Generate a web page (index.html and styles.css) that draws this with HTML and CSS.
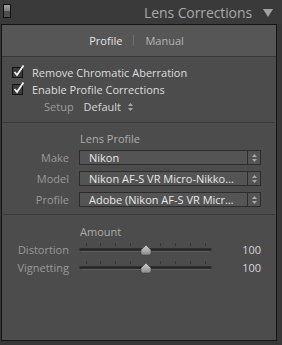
FILE: index.html
```html
<!DOCTYPE html>
<html>
<head>
<meta charset="utf-8">
<link rel="stylesheet" href="styles.css">
</head>
<body>
<div class="header">
  <span class="collapse"></span>
  <div class="title">
    <span>Lens Corrections</span>
    <svg class="tri" width="10" height="8" viewBox="0 0 10 8"><path d="M0 0 H10 L5 8 Z" fill="#a2a2a2"/></svg>
  </div>
</div>
<div class="panel">
  <div class="tabs">
    <span class="tab active">Profile</span>
    <span class="tab-sep"></span>
    <span class="tab">Manual</span>
  </div>
  <div class="content">
    <div class="check">
      <svg width="14" height="14" viewBox="0 0 14 14"><rect x="0.5" y="3.5" width="10" height="10" fill="#3a3a3a" stroke="#141414"/><path d="M2.5 8 L5 11 L11.5 1.5" fill="none" stroke="#f0f0f0" stroke-width="1.8"/></svg>
      <span>Remove Chromatic Aberration</span>
    </div>
    <div class="check">
      <svg width="14" height="14" viewBox="0 0 14 14"><rect x="0.5" y="3.5" width="10" height="10" fill="#3a3a3a" stroke="#141414"/><path d="M2.5 8 L5 11 L11.5 1.5" fill="none" stroke="#f0f0f0" stroke-width="1.8"/></svg>
      <span>Enable Profile Corrections</span>
    </div>
    <div class="setup">
      <span class="label">Setup</span>
      <span class="setup-value">Default</span>
      <svg width="7" height="10" viewBox="0 0 7 10"><path d="M3.5 1 L6 4 H1 Z M1 6 H6 L3.5 9 Z" fill="#a8a8a8"/></svg>
    </div>
    <div class="divider"></div>
    <div class="section-title first">Lens Profile</div>
    <div class="row sel-row first-sel">
      <span class="label">Make</span>
      <div class="select"><span class="sel-text">Nikon</span><span class="sel-arrow"><svg width="7" height="10" viewBox="0 0 7 10"><path d="M3.5 1 L6 4 H1 Z M1 6 H6 L3.5 9 Z" fill="#a8a8a8"/></svg></span></div>
    </div>
    <div class="row sel-row">
      <span class="label">Model</span>
      <div class="select"><span class="sel-text">Nikon AF-S VR Micro-Nikko…</span><span class="sel-arrow"><svg width="7" height="10" viewBox="0 0 7 10"><path d="M3.5 1 L6 4 H1 Z M1 6 H6 L3.5 9 Z" fill="#a8a8a8"/></svg></span></div>
    </div>
    <div class="row sel-row">
      <span class="label">Profile</span>
      <div class="select"><span class="sel-text">Adobe (Nikon AF-S VR Micr…</span><span class="sel-arrow"><svg width="7" height="10" viewBox="0 0 7 10"><path d="M3.5 1 L6 4 H1 Z M1 6 H6 L3.5 9 Z" fill="#a8a8a8"/></svg></span></div>
    </div>
    <div class="divider second"></div>
    <div class="section-title amount">Amount</div>
    <div class="row slider-row first-slider">
      <span class="label">Distortion</span>
      <svg class="slider" width="133" height="18" viewBox="0 0 133 18">
        <g stroke="#353535" stroke-width="1">
          <path d="M7.5 3 V6 M21.5 3 V6 M36.5 3 V6 M51.5 3 V6 M81.5 3 V6 M96.5 3 V6 M111.5 3 V6 M126.5 3 V6"/>
        </g>
        <path d="M1.5 9.5 H131.5" stroke="#262626" stroke-width="2.4" stroke-linecap="round"/>
        <path d="M2 11.5 H131" stroke="#5e5e5e" stroke-width="1"/>
        <defs><linearGradient id="tg" x1="0" y1="0" x2="0" y2="1"><stop offset="0" stop-color="#d0d0d0"/><stop offset="1" stop-color="#8c8c8c"/></linearGradient></defs>
        <path d="M62 13 V10 L67 5 L72 10 V13 Q72 15 70 15 H64 Q62 15 62 13 Z" fill="url(#tg)" stroke="#3a3a3a" stroke-width="0.6"/>
      </svg>
      <span class="val">100</span>
    </div>
    <div class="row slider-row">
      <span class="label">Vignetting</span>
      <svg class="slider" width="133" height="18" viewBox="0 0 133 18">
        <g stroke="#353535" stroke-width="1">
          <path d="M7.5 3 V6 M21.5 3 V6 M36.5 3 V6 M51.5 3 V6 M81.5 3 V6 M96.5 3 V6 M111.5 3 V6 M126.5 3 V6"/>
        </g>
        <path d="M1.5 9.5 H131.5" stroke="#262626" stroke-width="2.4" stroke-linecap="round"/>
        <path d="M2 11.5 H131" stroke="#5e5e5e" stroke-width="1"/>
        <path d="M62 13 V10 L67 5 L72 10 V13 Q72 15 70 15 H64 Q62 15 62 13 Z" fill="url(#tg)" stroke="#3a3a3a" stroke-width="0.6"/>
      </svg>
      <span class="val">100</span>
    </div>
  </div>
</div>
</body>
</html>
```

FILE: styles.css
```css
html, body {
  margin: 0;
  padding: 0;
}
body {
  width: 282px;
  height: 345px;
  overflow: hidden;
  background: #373737;
  font-family: "Open Sans", "DejaVu Sans", sans-serif;
  font-size: 11px;
  color: #dcdcdc;
}
.header {
  height: 24px;
  display: flex;
  align-items: center;
  justify-content: space-between;
  padding: 0 9px 0 3px;
  background: #3a3a3a;
}
.collapse {
  align-self: flex-start;
  margin-top: 4px;
  width: 6px;
  height: 12px;
  border: 1px solid #111;
  background: linear-gradient(#a4a4a4, #7c7c7c 46%, #151515 46%, #151515 54%, #4e4e4e 54%);
}
.title {
  display: flex;
  align-items: center;
  gap: 11px;
  color: #a8a8a8;
  font-size: 14px;
  letter-spacing: -0.1px;
}
.tri {
  margin-top: 1px;
}
.panel {
  margin-left: 1px;
  width: 274px;
  height: 315px;
  border: 1px solid #141414;
  background: #4c4c4c;
}
.tabs {
  height: 31px;
  border-bottom: 1px solid #383838;
  background: #565656;
  display: flex;
  align-items: center;
  justify-content: center;
  gap: 11px;
  padding-right: 5px;
  color: #b4b4b4;
}
.tab.active {
  color: #e4e4e4;
}
.tab-sep {
  width: 1px;
  height: 11px;
  background: #6c6c6c;
}
.content {
  padding-top: 7px;
}
.check {
  height: 17px;
  display: flex;
  align-items: center;
  padding-left: 10px;
  gap: 6px;
  color: #dedede;
}
.check svg {
  margin-top: -3px;
}
.setup {
  height: 17px;
  display: flex;
  align-items: center;
  padding-left: 42px;
}
.setup .label {
  color: #9c9c9c;
}
.setup-value {
  margin-left: 10px;
  margin-right: 6px;
  color: #d8d8d8;
}
.divider {
  margin: 7px 1px 0;
  border-top: 1px solid #3a3a3a;
}
.divider.second {
  margin-top: 7px;
}
.section-title {
  height: 16px;
  display: flex;
  align-items: center;
  padding-left: 78px;
  color: #adadad;
}
.section-title.first {
  margin-top: 7px;
}
.section-title.amount {
  margin-top: 8px;
}
.row {
  display: grid;
  grid-template-columns: 67px 182px;
  column-gap: 10px;
  align-items: center;
}
.row .label {
  text-align: right;
  color: #9a9a9a;
}
.sel-row {
  height: 15px;
  margin-top: 6px;
}
.sel-row.first-sel {
  margin-top: 4px;
}
.select {
  height: 13px;
  border: 1px solid #2c2c2c;
  background: #545454;
  display: flex;
  align-items: center;
}
.sel-text {
  flex: 1;
  padding-left: 9px;
  color: #e8e8e8;
  white-space: nowrap;
  overflow: hidden;
  line-height: 13px;
}
.sel-arrow {
  width: 12px;
  height: 13px;
  border-left: 1px solid #2c2c2c;
  display: flex;
  align-items: center;
  justify-content: center;
}
.slider-row {
  height: 18px;
  grid-template-columns: 67px 133px 39px;
}
.slider-row.first-slider {
  margin-top: 1px;
}
.slider {
  display: block;
}
.val {
  text-align: right;
  color: #d6d6d6;
}
```
